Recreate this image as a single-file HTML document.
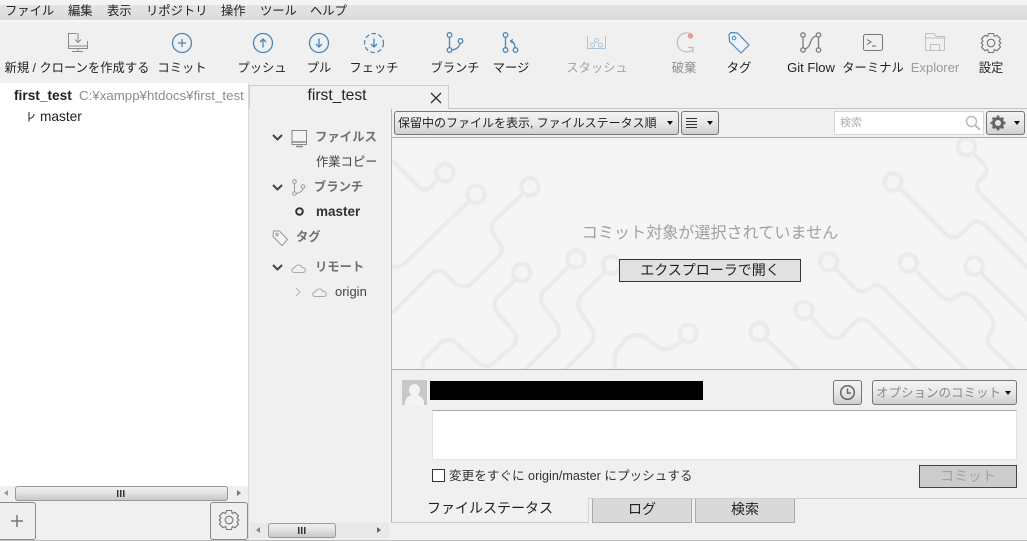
<!DOCTYPE html>
<html lang="ja"><head><meta charset="utf-8">
<style>
html,body{margin:0;padding:0;width:1027px;height:541px;overflow:hidden;background:#f0f0f0}
body{position:relative;font-family:"Liberation Sans","Noto Sans CJK JP",sans-serif;font-size:12.3px;color:#222}
.a{position:absolute}
.t{position:absolute;white-space:nowrap;line-height:16px}
.c{position:absolute;white-space:nowrap;line-height:16px;transform:translateX(-50%)}
.g{color:#9a9a9a}
.btn{position:absolute;box-sizing:border-box;border:1px solid #777;border-radius:3px;background:linear-gradient(#f4f4f4 0%,#e8e8e8 50%,#cfcfcf 100%)}
.tri{position:absolute;width:0;height:0;border-left:3.5px solid transparent;border-right:3.5px solid transparent;border-top:4px solid #111}
svg{position:absolute;overflow:visible}
</style></head><body>
<div class="a" style="left:0;top:0;width:1027px;height:5px;background:#f4f4f4"></div>
<div class="a" style="left:0;top:5px;width:1027px;height:15px;background:linear-gradient(#e4e4e4,#dbdbdb)"></div>
<div class="a" style="left:0;top:20px;width:1027px;height:2px;background:#f8f8f8"></div>
<span class="t" style="left:5px;top:3px">ファイル</span>
<span class="t" style="left:68px;top:3px">編集</span>
<span class="t" style="left:107px;top:3px">表示</span>
<span class="t" style="left:146px;top:3px">リポジトリ</span>
<span class="t" style="left:221px;top:3px">操作</span>
<span class="t" style="left:260px;top:3px">ツール</span>
<span class="t" style="left:310px;top:3px">ヘルプ</span>

<!-- toolbar icons -->
<svg style="left:0;top:0" width="1027" height="60" fill="none">
<g stroke="#8a8a8a" stroke-width="1"><path d="M76.5 33.500H68.500V48.500H87.500V41M72 51.500H83M78 48.500V51M78 33V42M75 39.500L78 42.500L81 39.500M68.500 46H87.500"/></g>
<g stroke="#4a86b8" stroke-width="1.300">
<circle cx="182" cy="43" r="9.500"/><path d="M182 39V47M178 43H186"/>
<circle cx="263" cy="43" r="9.500"/><path d="M263 47.500V39M260 42L263 39L266 42"/>
<circle cx="319" cy="43" r="9.500"/><path d="M319 38.500V47M316 44L319 47L322 44"/>
<circle cx="374" cy="43" r="9.500" stroke-dasharray="4.500 2.500"/><path d="M374 38.500V47M371 44L374 47L377 44"/>
<circle cx="449.500" cy="35" r="2.300"/><circle cx="449.500" cy="50" r="2.300"/><circle cx="460.500" cy="41" r="2.300"/><path d="M449.500 37.500V47.700M460 43.300C459.500 47 456 49.500 452 50"/>
<circle cx="505.500" cy="35" r="2.300"/><circle cx="505.500" cy="50" r="2.300"/><circle cx="515.500" cy="50" r="2.300"/><path d="M505.500 37.500V47.700M515 47.700C515 44 514 42 511 41M513 39.500L510.500 41L512.500 43"/>
</g>
<g stroke="#a9c3da" stroke-width="1"><path d="M587.500 36V48.500H605.500V36"/><circle cx="596.500" cy="40.500" r="2"/><circle cx="592.500" cy="45" r="2"/><circle cx="600.500" cy="45" r="2"/></g>
<path d="M692 34.500A9.500 9.500 0 1 0 692.500 50M688 47.500H693V53" stroke="#bdbdbd" stroke-width="1.200"/><circle cx="690.500" cy="36" r="2.700" fill="#e79a9a"/>
<path d="M731 32.500L737.500 33L749 45L741 53L729.500 41.500L729 34.500Z" stroke="#4a86b8" stroke-width="1.200" fill="#eef4fa" stroke-linejoin="round"/><circle cx="734" cy="38" r="1.800" stroke="#4a86b8"/>
<g stroke="#7d7d7d" stroke-width="1.300"><circle cx="803" cy="35" r="2.200"/><circle cx="803" cy="50" r="2.200"/><circle cx="818.500" cy="35" r="2.200"/><circle cx="818.500" cy="50" r="2.200"/><path d="M803 37.200V47.800M818.500 37.200V47.800M805 49C812 47 809 37 816.500 36"/></g>
<rect x="863.500" y="34.500" width="19" height="16" rx="2" stroke="#777"/><path d="M867 39.500L871 42L867 44.500M872 46H876" stroke="#666"/>
<g stroke="#c0c0c0" stroke-width="1"><path d="M925.500 50.500V33.500H934L936 36.500H944.500V50.500ZM925.500 38H944.500M930.500 50.500V44.500H939.500V50.500"/></g>
<g stroke="#777" stroke-width="1.100"><circle cx="991" cy="43" r="3.800"/><path d="M988.500 33.500H993.500L994.300 36.500L997 35.300L1000.500 38.800L999 41.300L1001 43L999 44.700L1000.500 47.200L997 50.700L994.300 49.500L993.500 52.500H988.500L987.700 49.500L985 50.700L981.500 47.200L983 44.700L981 43L983 41.300L981.500 38.800L985 35.300L987.700 36.500Z" stroke-linejoin="round"/></g>
</svg>
<span class="c" style="left:77px;top:60px">新規 / クローンを作成する</span>
<span class="c" style="left:182px;top:60px">コミット</span>
<span class="c" style="left:262px;top:60px">プッシュ</span>
<span class="c" style="left:319px;top:60px">プル</span>
<span class="c" style="left:374px;top:60px">フェッチ</span>
<span class="c" style="left:455px;top:60px">ブランチ</span>
<span class="c" style="left:511px;top:60px">マージ</span>
<span class="c g" style="left:597px;top:60px;color:#a5a5a5">スタッシュ</span>
<span class="c g" style="left:684px;top:60px;color:#8f8f8f">破棄</span>
<span class="c" style="left:739px;top:60px">タグ</span>
<span class="c" style="left:811px;top:60px;font-size:13px">Git Flow</span>
<span class="c" style="left:873px;top:60px">ターミナル</span>
<span class="c g" style="left:935px;top:60px;font-size:13px">Explorer</span>
<span class="c" style="left:991px;top:60px">設定</span>

<!-- left panel -->
<div class="a" style="left:0;top:83px;width:248px;height:403px;background:#fff"></div>
<div class="a" style="left:248px;top:83px;width:1px;height:458px;background:#d8d8d8"></div>
<span class="t" style="left:14px;top:88px;font-weight:bold;font-size:13.7px">first_test</span>
<span class="t" style="left:79px;top:88px;color:#8c8c8c;font-size:13.3px">C:¥xampp¥htdocs¥first_test</span>
<svg style="left:26px;top:111px" width="12" height="12" fill="none" stroke="#444" stroke-width="1.200"><path d="M3 1V10.500M8 3C8 6.500 5 7 3 8"/></svg>
<span class="t" style="left:40px;top:109px;font-size:13.7px">master</span>

<!-- left scrollbar -->
<div class="a" style="left:0;top:486px;width:248px;height:16px;background:#efefef"></div>
<div class="btn" style="left:15px;top:486px;width:213px;height:15px;border-color:#999;background:linear-gradient(#f0f0f0,#e2e2e2 45%,#c8c8c8)"></div>
<div class="a" style="left:117px;top:490px;width:8px;height:7px;background:repeating-linear-gradient(90deg,#333 0 1.500px,transparent 1.500px 3px)"></div>
<svg style="left:0;top:486px" width="250" height="16"><path d="M8 4V10L4 7Z" fill="#999"/><path d="M237 4V10L241 7Z" fill="#777"/></svg>
<div class="btn" style="left:-2px;top:502px;width:38px;height:38px;background:#efefef;border-color:#888"></div>
<svg style="left:9px;top:513px" width="16" height="16"><path d="M2 8H14M8 2V14" stroke="#777" stroke-width="1.500"/></svg>
<div class="btn" style="left:210px;top:502px;width:38px;height:38px;background:#efefef;border-color:#888"></div>
<svg style="left:0;top:0" width="260" height="541" fill="none"><g transform="translate(229,520)" stroke="#777" stroke-width="1.100"><circle r="3.800"/><path d="M-2.500 -9.500H2.500L3.300 -6.500L6 -7.700L9.500 -4.200L8 -1.700L10 0L8 1.700L9.500 4.200L6 7.700L3.300 6.500L2.500 9.500H-2.500L-3.300 6.500L-6 7.700L-9.500 4.200L-8 1.700L-10 0L-8 -1.700L-9.500 -4.200L-6 -7.700L-3.300 -6.500Z" stroke-linejoin="round"/></g></svg>
<div class="a" style="left:0;top:540px;width:1027px;height:1px;background:#bdbdbd"></div>

<!-- tab -->
<div class="a" style="left:249px;top:85px;width:200px;height:24px;box-sizing:border-box;border:1px solid #cfcfcf;border-bottom:none;background:#f0f0f0"></div>
<div class="a" style="left:449px;top:108px;width:578px;height:1px;background:#c4c4c4"></div>
<span class="c" style="left:337px;top:88px;font-size:15.6px">first_test</span>
<svg style="left:430px;top:92px" width="12" height="12"><path d="M1 1L11 11M11 1L1 11" stroke="#333" stroke-width="1.300"/></svg>

<!-- sidebar tree -->
<svg style="left:0;top:0" width="392" height="320" fill="none">
<g stroke="#444" stroke-width="2"><path d="M273 135L277.500 139.500L282 135M273 185L277.500 189.500L282 185M273 265L277.500 269.500L282 265"/></g>
<path d="M292 130.500H306.500V144.500H292Z" stroke="#888" fill="#f4f4f4"/><path d="M291.500 142H307M296 146.500H303" stroke="#888" stroke-width="1.500"/>
<g stroke="#999"><circle cx="294.500" cy="181.500" r="1.800"/><circle cx="294.500" cy="193.500" r="1.800"/><circle cx="303" cy="186.500" r="1.800"/><path d="M294.500 183.500V191.500M303 188.500C302.500 191 299 193 296.500 193.500"/></g>
<circle cx="299.500" cy="211.500" r="3.300" stroke="#333" stroke-width="2"/>
<path d="M273.500 231L279.500 231L287.500 239.500L282 245.500L273 236.500Z" stroke="#999" fill="#f4f4f4" stroke-linejoin="round"/><circle cx="277" cy="234.500" r="1.200" stroke="#999"/>
<path d="M294 272.500C291 272.500 291 268 294.500 268C295 265 300.500 263.500 302 267.500C306 267 306.500 272.500 303 272.500Z" stroke="#aaa"/>
<path d="M296 288L300 292L296 296" stroke="#b5b5b5"/>
<path d="M315 296.500C312 296.500 312 292 315.500 292C316 289 321.500 287.500 323 291.500C327 291 327.500 296.500 324 296.500Z" stroke="#aaa"/>
</svg>
<div class="a" style="left:315px;top:128px;width:62px;height:18px;overflow:hidden"><span class="t" style="left:0;top:1px;font-weight:bold;color:#707070;letter-spacing:.1px">ファイルステータス</span></div>
<div class="a" style="left:316px;top:153px;width:60px;height:18px;overflow:hidden"><span class="t" style="left:0;top:1px;color:#444">作業コピー</span></div>
<span class="t" style="left:314px;top:179px;font-weight:bold;color:#707070">ブランチ</span>
<span class="t" style="left:316px;top:204px;font-weight:bold;color:#333;font-size:13.5px">master</span>
<span class="t" style="left:296px;top:229px;font-weight:bold;color:#707070">タグ</span>
<span class="t" style="left:315px;top:259px;font-weight:bold;color:#707070">リモート</span>
<span class="t" style="left:335px;top:284px;color:#444;font-size:13px">origin</span>
<div class="a" style="left:391px;top:109px;width:1px;height:413px;background:#b5b5b5"></div>

<!-- bottom scrollbar sidebar -->
<div class="a" style="left:250px;top:523px;width:139px;height:15px;background:#e9e9e9"></div>
<div class="btn" style="left:268px;top:523px;width:68px;height:15px;border-color:#999;background:linear-gradient(#f0f0f0,#e2e2e2 45%,#c8c8c8)"></div>
<div class="a" style="left:298px;top:527px;width:8px;height:7px;background:repeating-linear-gradient(90deg,#333 0 1.500px,transparent 1.500px 3px)"></div>
<svg style="left:250px;top:523px" width="140" height="15"><path d="M10 4V10L6 7Z" fill="#888"/><path d="M127 4V10L131 7Z" fill="#666"/></svg>

<!-- file filter row -->
<div class="btn" style="left:394px;top:111px;width:285px;height:24px"></div>
<span class="t" style="left:398px;top:115px;color:#222;font-size:12px">保留中のファイルを表示, ファイルステータス順</span>
<div class="tri" style="left:666.500px;top:121px"></div>
<div class="btn" style="left:681px;top:111px;width:38px;height:24px"></div>
<svg style="left:686px;top:117px" width="12" height="12"><path d="M0 1.500H11M0 4.500H11M0 7.500H11M0 10.500H11" stroke="#333"/></svg>
<div class="tri" style="left:706.500px;top:121px"></div>
<div class="a" style="left:834px;top:111px;width:150px;height:24px;box-sizing:border-box;background:#fff;border:1px solid #d6d6d6"></div>
<span class="t" style="left:840px;top:115px;font-size:11px;color:#b0b0b0">検索</span>
<svg style="left:965px;top:115px" width="16" height="16" fill="none" stroke="#bbb" stroke-width="1.500"><circle cx="6.500" cy="6.500" r="5"/><path d="M10 10L15 15" stroke-width="2"/></svg>
<div class="btn" style="left:986px;top:111px;width:39px;height:24px"></div>
<svg style="left:990px;top:115px" width="16" height="16"><circle cx="8" cy="8" r="4.500" fill="none" stroke="#666" stroke-width="3"/><path d="M8 0.500V15.500M0.500 8H15.500M2.700 2.700L13.300 13.300M13.300 2.700L2.700 13.300" stroke="#666" stroke-width="2.500" stroke-dasharray="3 9"/></svg>
<div class="tri" style="left:1013.500px;top:121px"></div>

<!-- main pane -->
<div class="a" style="left:392px;top:137px;width:635px;height:233px;box-sizing:border-box;background:#f5f5f5;border-top:1px solid #aeaeae;border-bottom:1px solid #aeaeae;overflow:hidden">
<svg style="left:-392px;top:-138px" width="1027" height="370" fill="none" stroke="#ebebeb" stroke-width="4.300">
<g transform="translate(390 135) scale(.33333)" stroke-width="13">
<circle cx="165" cy="113" r="26"/><path d="M5 75L85 155Q105 172 125 155L145 130"/>
<circle cx="258" cy="178" r="26"/><path d="M240 196L50 380Q25 405 0 390"/>
<circle cx="420" cy="155" r="26"/><path d="M400 175L315 255Q295 280 315 305L325 320Q345 345 325 365L245 445Q220 465 195 445L165 415Q145 400 125 415L5 535"/>
<circle cx="395" cy="413" r="26"/><path d="M377 432L320 490Q305 510 320 530L372 590Q385 610 372 630L310 685Q290 700 265 685L200 625Q175 605 150 625L105 670Q95 685 100 705"/>
<circle cx="558" cy="372" r="26"/><path d="M540 390L460 470Q445 495 460 515L500 565Q515 590 500 610L405 705"/>
<circle cx="665" cy="390" r="26"/><path d="M647 408L575 480Q555 510 575 535L605 580Q620 605 600 630L525 705"/>
<circle cx="895" cy="595" r="26"/><path d="M875 615Q845 650 810 640L770 610Q740 590 710 610L685 640Q665 670 680 705"/>
</g>
<g transform="translate(700 135) scale(.33333)" stroke-width="13">
<circle cx="800" cy="35" r="26"/><path d="M820 55L850 85Q870 105 850 125L835 140Q825 155 840 175L985 319"/>
<circle cx="579" cy="141" r="26"/><path d="M600 160L735 295Q758 320 785 295L810 270Q830 250 855 270L985 399"/>
<circle cx="386" cy="380" r="26"/><path d="M405 400L465 460Q490 480 510 460Q530 440 550 460L800 705"/>
<circle cx="625" cy="384" r="26"/><path d="M645 404L720 480Q745 505 770 485Q795 465 820 485L870 540Q890 570 870 595Q855 615 875 640L945 705"/>
<circle cx="822" cy="393" r="26"/><path d="M842 413L985 554"/>
<circle cx="312" cy="526" r="26"/><path d="M332 546L385 600Q405 620 430 600L460 565Q485 540 510 565L650 705"/>
<circle cx="177" cy="590" r="26"/><path d="M197 610L295 705"/>
</g>
</svg>
</div>
<span class="c" style="left:710px;top:223px;font-size:16.100px;line-height:20px;color:#a0a0a0">コミット対象が選択されていません</span>
<div class="a" style="left:619px;top:259px;width:182px;height:23px;box-sizing:border-box;background:#e1e1e1;border:1px solid #333"></div>
<span class="c" style="left:710px;top:262px;font-size:14px;color:#222">エクスプローラで開く</span>

<!-- commit area -->
<div class="a" style="left:402px;top:380px;width:25px;height:25px;background:#c8c8c8;overflow:hidden">
<div class="a" style="left:7px;top:4px;width:11px;height:12px;border-radius:50%;background:#f4f4f4"></div>
<div class="a" style="left:3px;top:15px;width:19px;height:14px;border-radius:8px 8px 0 0;background:#f4f4f4"></div></div>
<div class="a" style="left:430px;top:381px;width:273px;height:19px;background:#000"></div>
<div class="btn" style="left:833px;top:380px;width:29px;height:25px"></div>
<svg style="left:839px;top:384px" width="17" height="17" fill="none" stroke="#666" stroke-width="1.500"><circle cx="8.500" cy="8.500" r="6.800"/><path d="M8.500 4.500V9H12"/></svg>
<div class="btn" style="left:872px;top:380px;width:145px;height:25px"></div>
<span class="t" style="left:876px;top:385px;color:#888;font-size:12.5px">オプションのコミット</span>
<div class="tri" style="left:1004.500px;top:391px"></div>
<div class="a" style="left:432px;top:410px;width:585px;height:50px;box-sizing:border-box;background:#fff;border-top:1px solid #aaa;border-left:1px solid #e3e3e3;border-right:1px solid #e3e3e3;border-bottom:1px solid #e3e3e3"></div>
<div class="a" style="left:432px;top:469px;width:13px;height:13px;box-sizing:border-box;background:#fff;border:1px solid #333"></div>
<span class="t" style="left:449px;top:468px;color:#333;font-size:12.6px">変更をすぐに origin/master にプッシュする</span>
<div class="a" style="left:919px;top:465px;width:98px;height:23px;box-sizing:border-box;background:#ccc;border:1px solid #444"></div>
<span class="c" style="left:968px;top:468px;font-size:14px;color:#a2a2a2">コミット</span>

<!-- bottom tabs -->
<div class="a" style="left:588px;top:498px;width:439px;height:1px;background:#cfcfcf"></div>
<div class="a" style="left:588px;top:498px;width:1px;height:25px;background:#d4d4d4"></div>
<div class="a" style="left:391px;top:522px;width:198px;height:1px;background:#c8c8c8"></div>
<span class="c" style="left:490px;top:500px;font-size:14px">ファイルステータス</span>
<div class="a" style="left:592px;top:499px;width:100px;height:24px;box-sizing:border-box;background:#d9d9d9;border:1px solid #aaa;border-top:none"></div>
<span class="c" style="left:642px;top:501px;font-size:14px">ログ</span>
<div class="a" style="left:695px;top:499px;width:100px;height:24px;box-sizing:border-box;background:#d9d9d9;border:1px solid #aaa;border-top:none"></div>
<span class="c" style="left:745px;top:501px;font-size:14px">検索</span>
</body></html>
